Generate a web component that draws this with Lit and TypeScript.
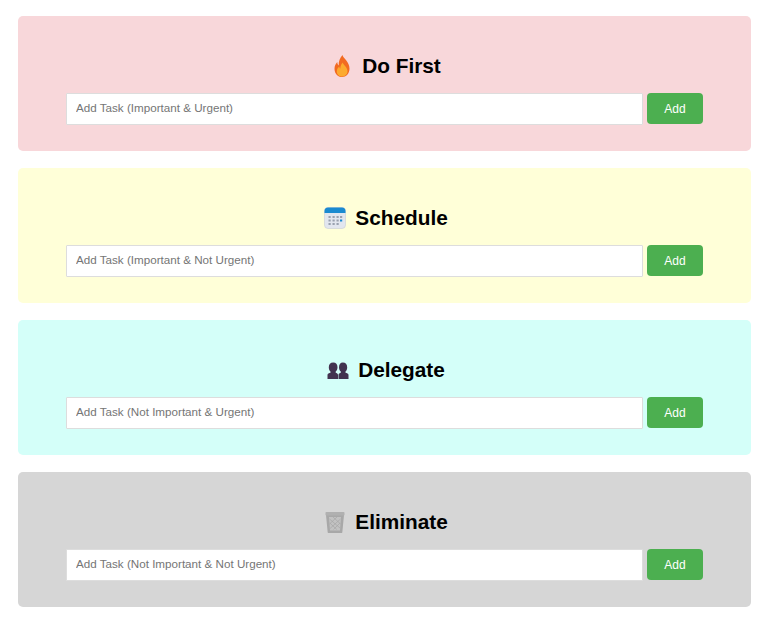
import { LitElement, html, css, svg } from "lit";
import { customElement, property } from "lit/decorators.js";

const icons = {
  fire: svg`<path d="M12.500 1c.4 3.200 7 6.500 7 13.500 0 5-3.400 8.500-7.500 8.500s-7.500-3.300-7.500-8.300c0-2.700 1.100-5 2.800-6.700 0 1.700.4 2.800 1.400 3.400C8.500 7.500 10 3.500 12.500 1Z" fill="#f26a21"/><path d="M12.700 8.500c.5 2.400 4.800 4.400 4.800 8.800 0 3.300-2.500 5.200-5.500 5.200s-5.200-2.100-5.200-5c0-2.200 1.100-3.900 2.500-4.900.1 1 .4 1.700 1 2.100.1-2.200.6-4.300 2.400-6.200Z" fill="#fcaa2e"/>`,
  calendar: svg`<rect x="1.500" y="1.500" width="21" height="21" rx="3.500" fill="#e2e6ef" stroke="#c8ccd6" stroke-width=".6"/><path d="M1.500 7V5a3.500 3.500 0 0 1 3.500-3.500h14A3.500 3.500 0 0 1 22.500 5v2Z" fill="#1a8ad0"/><g fill="#9aa1b0"><rect x="5.500" y="10" width="2.200" height="2"/><rect x="9.500" y="10" width="2.200" height="2"/><rect x="13.500" y="10" width="2.200" height="2"/><rect x="17" y="10" width="2.200" height="2"/><rect x="5.500" y="13.500" width="2.200" height="2"/><rect x="9.500" y="13.500" width="2.200" height="2"/><rect x="13.500" y="13.500" width="2.200" height="2"/><rect x="5.500" y="17" width="2.200" height="2"/><rect x="9.500" y="17" width="2.200" height="2"/><rect x="13.500" y="17" width="2.200" height="2"/></g><rect x="17" y="13.500" width="2.200" height="2" fill="#1a8ad0"/>`,
  people: svg`<g fill="#42324f"><path d="M7.200 4.500c2.800 0 4.300 2 4.300 4.700 0 1.800-.6 3.300-1.800 4.300v1.300c1 .4 2.300.9 2.300 2.200V21H1.500v-4c0-1.300 1.700-1.800 3-2.200v-1.300C3.300 12.500 2.800 11 2.800 9.200c0-2.700 1.600-4.700 4.400-4.700Z"/><path d="M16.800 4.500c2.800 0 4.400 2 4.400 4.700 0 1.800-.5 3.300-1.700 4.300v1.300c1.300.4 3 .9 3 2.200V21H12.500v-4c0-1.300 1.300-1.800 2.300-2.200v-1.300c-1.200-1-1.800-2.500-1.800-4.300 0-2.700 1.500-4.700 3.800-4.700Z"/></g>`,
  trash: svg`<path d="M3 5h18l-1.700 17.500a1 1 0 0 1-1 .5H5.700a1 1 0 0 1-1-.5Z" fill="#a8a8a8"/><path d="M6 7h12l-1 13.500H7Z" fill="#c2c2c2"/><path d="M6.500 9l10.500 9M6.800 13l7 6.500M10 7l7.600 7M17.500 9L7 18.500M17 13l-6.500 6.500M14 7l-7.500 7" stroke="#a6a6a6" stroke-width=".7" fill="none"/><rect x="2.500" y="2" width="19" height="3.500" rx=".8" fill="#b0b0b0"/>`,
};

type IconName = keyof typeof icons;

@customElement("task-quadrant")
export class TaskQuadrant extends LitElement {
  static styles = css`
    :host {
      display: block;
      box-sizing: border-box;
      height: 135px;
      padding: 36px 48px 0;
      border-radius: 5px;
    }

    h2 {
      display: flex;
      justify-content: center;
      align-items: center;
      gap: 8px;
      margin: 0 0 14px;
      padding-left: 2px;
      height: 27px;
      font-size: 20.8px;
      line-height: 27px;
      font-weight: 700;
      color: #000;
    }

    h2 svg {
      width: 24px;
      height: 24px;
      flex: none;
    }

    .row {
      display: flex;
      gap: 4px;
    }

    input {
      flex: 1 1 0%;
      min-width: 0;
      box-sizing: border-box;
      height: 32px;
      padding: 0 9px 3px;
      border: 1px solid #ddd;
      border-radius: 1px;
      background: #fff;
      font: 11.650px "Liberation Sans", Arial, sans-serif;
      color: #333;
    }

    input::placeholder {
      color: #757575;
      opacity: 1;
    }

    button {
      width: 56px;
      height: 31px;
      padding: 0;
      border: none;
      border-radius: 4px;
      background: #4caf50;
      font: 12px "Liberation Sans", Arial, sans-serif;
      color: #fff;
    }
  `;

  @property() heading = "";
  @property() icon: IconName = "fire";
  @property() placeholder = "";

  render() {
    return html`
      <h2>
        <svg viewBox="0 0 24 24">${icons[this.icon]}</svg>
        <span>${this.heading}</span>
      </h2>
      <div class="row">
        <input type="text" placeholder=${this.placeholder} />
        <button>Add</button>
      </div>
    `;
  }
}

@customElement("app-root")
export class AppRoot extends LitElement {
  static styles = css`
    :host {
      display: block;
      font-family: "Liberation Sans", Arial, sans-serif;
      background: #fff;
    }

    main {
      display: flex;
      flex-direction: column;
      gap: 17px;
      padding: 16px 17px 19px 18px;
    }

    .first {
      background: #f8d7da;
    }

    .schedule {
      background: #ffffd8;
    }

    .delegate {
      background: #d4fff9;
    }

    .eliminate {
      background: #d6d6d6;
    }
  `;

  render() {
    return html`
      <main>
        <task-quadrant class="first" heading="Do First" icon="fire" placeholder="Add Task (Important &amp; Urgent)"></task-quadrant>
        <task-quadrant class="schedule" heading="Schedule" icon="calendar" placeholder="Add Task (Important &amp; Not Urgent)"></task-quadrant>
        <task-quadrant class="delegate" heading="Delegate" icon="people" placeholder="Add Task (Not Important &amp; Urgent)"></task-quadrant>
        <task-quadrant class="eliminate" heading="Eliminate" icon="trash" placeholder="Add Task (Not Important &amp; Not Urgent)"></task-quadrant>
      </main>
    `;
  }
}
